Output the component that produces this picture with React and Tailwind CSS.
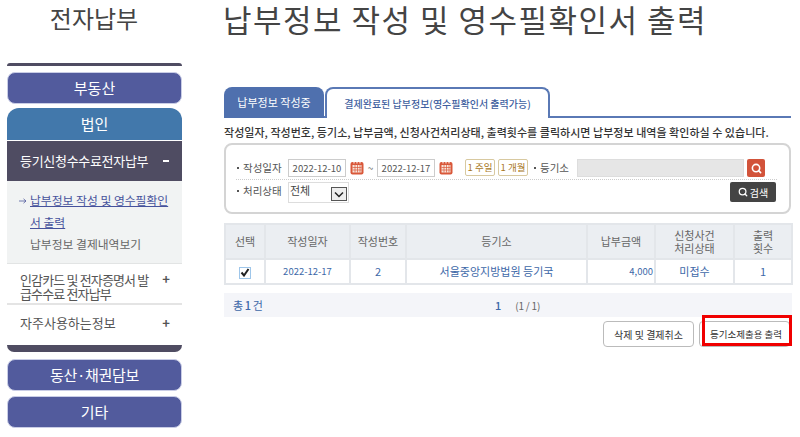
import React from "react";
import { Search } from "lucide-react";

const KR = "font-['Noto_Sans_CJK_KR','Noto_Sans',sans-serif]";

const Calendar = () => (
  <svg width="14" height="14" viewBox="0 0 14 14" className="shrink-0 mt-[2px]">
    <rect x="0.5" y="1" width="13" height="12.5" rx="2" fill="#d9583a" />
    <rect x="2.5" y="4" width="9" height="7.5" fill="#f7e6dc" />
    <path d="M4 0.5v2M7 0.5v2M10 0.5v2" stroke="#fff" strokeWidth="1" />
    <path d="M2.5 6.5h9M2.5 9h9M5 4v7.5M7.5 4v7.5M10 4v7.5" stroke="#d9583a" strokeWidth="0.7" />
  </svg>
);

const MainMenu = ({ children, className = "" }) => (
  <div className={`h-[32px] rounded-lg bg-[#525b9d] border border-[#c9cde6] flex items-center justify-center text-[15px] text-white ${className}`}>
    {children}
  </div>
);

const Bullet = ({ children, className = "" }) => (
  <span className={`flex items-center gap-[4px] pl-[1px] text-[10.5px] text-[#555] ${className}`}>
    <span className="w-[2px] h-[2px] bg-[#555]" />
    {children}
  </span>
);

const DateBox = ({ value }) => (
  <div className="w-[58px] h-[18px] shrink-0 border border-[#ccc] flex items-center justify-center text-[9.5px] text-[#555]">
    {value}
  </div>
);

const Period = ({ children }) => (
  <div className="w-[30px] h-[17px] border border-[#d8c9a0] rounded-[2px] flex items-center justify-center text-[9.5px] text-[#a8771c] whitespace-nowrap">
    {children}
  </div>
);

const Th = ({ children, className = "" }) => (
  <th className={`border-2 border-[#e3e6ea] bg-[#ebeef2] font-normal text-[11px] leading-[13px] text-[#666] ${className}`}>
    {children}
  </th>
);

const Td = ({ children, className = "text-[11px]" }) => (
  <td className={`border-2 border-[#e3e6ea] bg-white text-center text-[#3d68a8] ${className}`}>
    {children}
  </td>
);

const App = () => {
  return (
    <div className={`${KR} w-[800px] h-[437px] overflow-hidden bg-white flex`}>
      <aside className="w-[175px] ml-[7px] shrink-0 flex flex-col">
        <h2 className="h-[63px] pt-[2px] pr-[1px] text-center text-[24px] leading-[32px] text-[#444]">전자납부</h2>
        <div className="h-[3px] rounded-t-sm bg-[#4f4c62]" />
        <MainMenu className="mt-[6px]">부동산</MainMenu>
        <div className="mt-[4px] h-[32px] rounded-t-xl bg-[#4278ab] flex items-center justify-center text-[15px] text-white">
          법인
        </div>
        <div className="mt-px h-[40px] bg-[#4f4c62] flex items-center justify-between pl-[13px] pr-[12px] text-[13px] tracking-[-0.3px] text-white">
          <span>등기신청수수료전자납부</span>
          <span className="w-[6px] h-[2px] bg-white mr-[1px]" />
        </div>
        <div className="h-[83px] bg-[#f1f3f3] border-b border-[#e2e4e4] pl-[12px] pt-[8px] text-[11.8px] leading-[22px] text-[#666]">
          <div className="flex">
            <svg width="8" height="6" viewBox="0 0 8 6" className="shrink-0 mt-[9px] mr-[3px]">
              <path d="M0 3h7M4.5 0.8L7 3 4.5 5.2" fill="none" stroke="#525b9d" strokeWidth="0.8" />
            </svg>
            <a className="text-[#46529c] underline w-[148px]">납부정보 작성 및 영수필확인서 출력</a>
          </div>
          <div className="pl-[11px]">납부정보 결제내역보기</div>
        </div>
        <div className="h-[41px] border-b-2 border-[#e4e4e4] flex justify-between pl-[13px] pr-[12px] pt-[9px] text-[13px] leading-[14px] text-[#555]">
          <span className="w-[136px] tracking-[-0.85px]">인감카드 및 전자증명서 발급수수료 전자납부</span>
          <span className="font-bold leading-[12px]">+</span>
        </div>
        <div className="h-[40px] flex justify-between pl-[13px] pr-[12px] pt-[11px] text-[13px] leading-[14px] text-[#555]">
          <span>자주사용하는정보</span>
          <span className="font-bold">+</span>
        </div>
        <div className="h-[7px] rounded-b-lg bg-[#4f4c62]" />
        <MainMenu className="mt-[7px] tracking-[-0.3px]">동산·채권담보</MainMenu>
        <MainMenu className="mt-[5px]">기타</MainMenu>
      </aside>

      <main className="ml-[42px] w-[567px] shrink-0">
        <h1 className="-ml-[1px] h-[87px] text-[31px] leading-[38px] tracking-[1.5px] text-[#444] whitespace-nowrap">
          납부정보 작성 및 영수필확인서 출력
        </h1>

        <div className="h-[31px] flex items-end border-b-2 border-[#5a79b5]">
          <div className="w-[100px] h-[31px] -mb-[2px] rounded-t-lg bg-[#4f70ae] flex items-center justify-center text-[11px] text-white">
            납부정보 작성중
          </div>
          <div className="ml-px w-[225px] h-[31px] -mb-[2px] rounded-t-lg border-2 border-b-0 border-[#5a79b5] bg-white flex items-center justify-center text-[10px] font-medium text-[#3f5f9f] whitespace-nowrap">
            결제완료된 납부정보(영수필확인서 출력가능)
          </div>
        </div>

        <p className="mt-[6px] text-[11px] leading-[16px] font-medium tracking-[0.03px] text-[#333] whitespace-nowrap">
          작성일자, 작성번호, 등기소, 납부금액, 신청사건처리상태, 출력횟수를 클릭하시면 납부정보 내역을 확인하실 수 있습니다.
        </p>

        <div className="mt-[3px] h-[71px] rounded-lg border-2 border-[#d4d4d4] pl-[10px] pr-[12px] pt-[14px]">
          <div className="h-[21px] flex items-start border-b border-dotted border-[#ccc]">
            <Bullet className="w-[52px] h-[18px] shrink-0">작성일자</Bullet>
            <DateBox value="2022-12-10" />
            <span className="ml-[4px] flex"><Calendar /></span>
            <span className="w-[13px] text-center text-[10px] text-[#777] mt-[1px]">~</span>
            <DateBox value="2022-12-17" />
            <span className="ml-[4px] mr-[12px] flex"><Calendar /></span>
            <Period>1 주일</Period>
            <span className="ml-[3px]"><Period>1 개월</Period></span>
            <Bullet className="ml-[5px] w-[44px] h-[17px] shrink-0">등기소</Bullet>
            <div className="w-[167px] h-[18px] shrink-0 bg-[#e6e6e6] border border-[#ddd]" />
            <div className="ml-[3px] w-[18px] h-[18px] shrink-0 rounded-[2px] bg-[#d2533a] flex items-center justify-center">
              <Search size={11} strokeWidth={3.5} color="#fff" />
            </div>
          </div>
          <div className="flex items-start justify-between pr-[1px] mt-[2px]">
            <div className="flex items-start">
              <Bullet className="w-[52px] h-[18px]">처리상태</Bullet>
              <div className="w-[61px] h-[21px] border border-[#ddd] flex justify-between pl-[1px] pt-[1px] pr-[1px] text-[11px] leading-[13px] text-[#444]">
                <span>전체</span>
                <div className="w-[16px] h-[14px] mt-[3px] border border-[#555] bg-[#eee] flex items-center justify-center">
                  <svg width="10" height="7" viewBox="0 0 10 7">
                    <path d="M1 1.5l4 4 4-4" fill="none" stroke="#222" strokeWidth="1.5" />
                  </svg>
                </div>
              </div>
            </div>
            <div className="w-[46px] h-[20px] rounded-[2px] bg-[#444] flex items-center justify-center gap-[2px] text-[10px] text-white">
              <Search size={10} strokeWidth={3} color="#fff" />
              검색
            </div>
          </div>
        </div>

        <table className="mt-[9px] w-[567px] table-fixed border-collapse">
          <thead>
            <tr className="h-[35px]">
              <Th className="w-[40px]">선택</Th>
              <Th className="w-[85px]">작성일자</Th>
              <Th className="w-[56px]">작성번호</Th>
              <Th className="w-[181px]">등기소</Th>
              <Th className="w-[68px]">납부금액</Th>
              <Th className="w-[79px]">신청사건<br />처리상태</Th>
              <Th className="w-[58px]">출력<br />횟수</Th>
            </tr>
          </thead>
          <tbody>
            <tr className="h-[25px]">
              <Td>
                <span className="mx-auto w-[12px] h-[12px] mt-[2px] border border-[#9ec6ea] bg-white flex items-center justify-center">
                  <svg width="10" height="9" viewBox="0 0 10 9">
                    <path d="M1.5 4.5l2.5 3 4.5-6.5" fill="none" stroke="#222" strokeWidth="2" />
                  </svg>
                </span>
              </Td>
              <Td className="text-[9.5px]">2022-12-17</Td>
              <Td>2</Td>
              <Td>서울중앙지방법원 등기국</Td>
              <Td className="text-right pr-px text-[9.5px]">4,000</Td>
              <Td>미접수</Td>
              <Td>1</Td>
            </tr>
          </tbody>
        </table>

        <div className="mt-[8px] w-[568px] h-[24px] bg-[#f4f5f9] flex items-center pl-[9px] text-[11px] text-[#3d68a8]">
          <span className="w-[28px] tracking-[-0.4px] whitespace-nowrap">총 <b className="font-medium">1</b> 건</span>
          <b className="ml-[234px] font-medium">1</b>
          <span className="ml-[14px] text-[10px] tracking-[-0.2px] text-[#666]">(1 / 1)</span>
        </div>

        <div className="mt-[4px] flex justify-end items-start gap-[5px] pr-[1px] relative">
          <div className="w-[91px] h-[26px] rounded-[4px] border border-[#bbb] flex items-center justify-center text-[10px] text-[#333]">
            삭제 및 결제취소
          </div>
          <div className="w-[91px] h-[26px] rounded-[4px] border border-[#bbb] flex items-center justify-center pl-[3px] text-[9.5px] text-[#333] whitespace-nowrap">
            등기소제출용 출력
          </div>
          <div className="absolute -right-[1px] -top-[6px] w-[90px] h-[31px] border-[3px] border-[#f00000]" />
        </div>
      </main>
    </div>
  );
};

export default App;
